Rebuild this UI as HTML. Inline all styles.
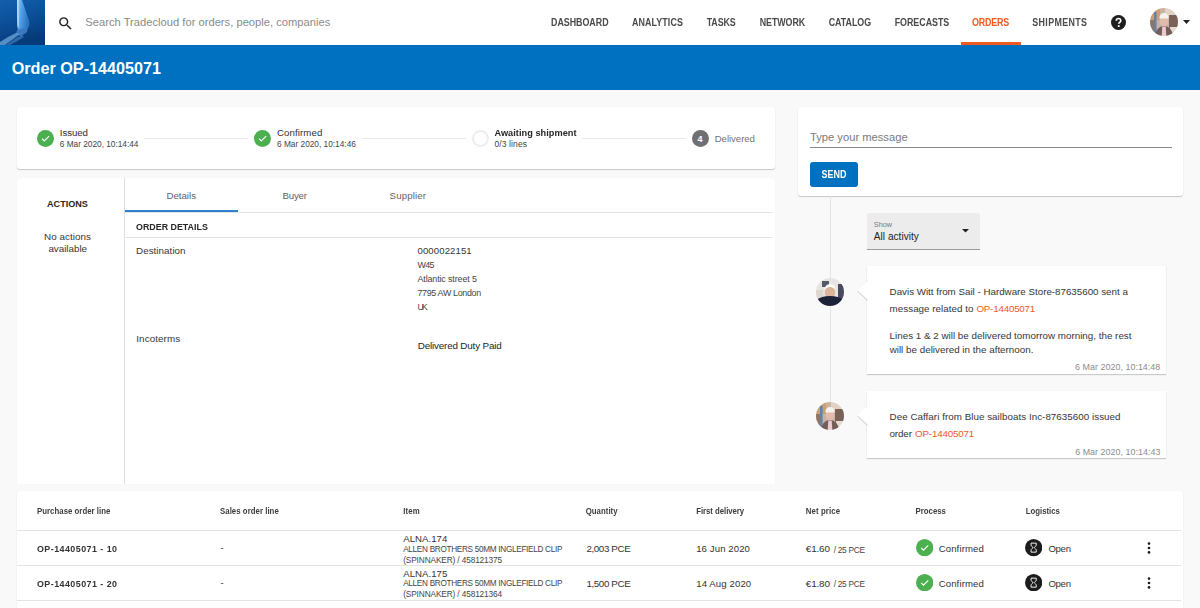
<!DOCTYPE html><html><head><meta charset="utf-8"><style>
html,body{margin:0;padding:0;}
body{width:1200px;height:608px;overflow:hidden;position:relative;background:#f9f9f9;font-family:"Liberation Sans",sans-serif;}
.t{position:absolute;white-space:nowrap;}
.b{position:absolute;}
</style></head><body>
<div class="b" style="left:0px;top:0px;width:1200px;height:45px;background:#fff;"></div>
<svg class="b" style="left:0;top:0" width="45" height="45" viewBox="0 0 45 45">
<defs><linearGradient id="sea" x1="0" y1="0" x2="0.3" y2="1"><stop offset="0" stop-color="#135fae"/><stop offset="0.5" stop-color="#0b4f98"/><stop offset="1" stop-color="#063a78"/></linearGradient>
<linearGradient id="sail" x1="0" y1="0" x2="1" y2="0.3"><stop offset="0" stop-color="#9fd0f6"/><stop offset="0.45" stop-color="#4f9fe6"/><stop offset="1" stop-color="#2a73c0"/></linearGradient>
<filter id="bl" x="-0.2" y="-0.2" width="1.4" height="1.4"><feGaussianBlur stdDeviation="0.45"/></filter></defs>
<rect width="45" height="45" fill="url(#sea)"/>
<g filter="url(#bl)">
<polygon points="17,-3 21,-3 29.5,22 29,27 24,30 18,31 17,22" fill="url(#sail)"/><polygon points="17,-3 18.5,-3 19,26 17.5,28" fill="#d8ecfb" opacity="0.6"/>
<polygon points="17,30 28,27 27,32 21,36 16,34" fill="#3a78c0"/>
<polygon points="0,45 0,42 8,37 16,33 20,34 12,40 5,45" fill="#6fa8dc" opacity="0.75"/>
<polygon points="6,45 16,38 22,35 24,37 14,43 10,45" fill="#4a86c8" opacity="0.6"/>
</g>
</svg>
<svg class="b" style="left:56.7px;top:14.7px" width="17" height="17" viewBox="0 0 24 24"><path fill="#212121" d="M15.5 14h-.79l-.28-.27A6.47 6.47 0 0 0 16 9.5 6.5 6.5 0 1 0 9.5 16c1.61 0 3.09-.59 4.23-1.57l.27.28v.79l5 4.99L20.49 19l-4.99-5zm-6 0C7.01 14 5 11.99 5 9.5S7.01 5 9.5 5 14 7.01 14 9.5 11.99 14 9.5 14z"/></svg>
<div class="t" style="left:85.30px;top:17.42px;font-size:11.2px;line-height:11.2px;color:#8a8a8a;">Search Tradecloud for orders, people, companies</div>
<div class="t" style="left:551.00px;top:18.87px;font-size:8.9px;line-height:8.9px;color:#4a4a4a;font-weight:bold;letter-spacing:-0.019px;transform:scaleY(1.150);transform-origin:0 7.53px;">DASHBOARD</div>
<div class="t" style="left:632.00px;top:18.87px;font-size:8.9px;line-height:8.9px;color:#4a4a4a;font-weight:bold;letter-spacing:0.112px;transform:scaleY(1.150);transform-origin:0 7.53px;">ANALYTICS</div>
<div class="t" style="left:706.70px;top:18.87px;font-size:8.9px;line-height:8.9px;color:#4a4a4a;font-weight:bold;letter-spacing:-0.101px;transform:scaleY(1.150);transform-origin:0 7.53px;">TASKS</div>
<div class="t" style="left:759.70px;top:18.87px;font-size:8.9px;line-height:8.9px;color:#4a4a4a;font-weight:bold;letter-spacing:-0.061px;transform:scaleY(1.150);transform-origin:0 7.53px;">NETWORK</div>
<div class="t" style="left:828.70px;top:18.87px;font-size:8.9px;line-height:8.9px;color:#4a4a4a;font-weight:bold;letter-spacing:-0.013px;transform:scaleY(1.150);transform-origin:0 7.53px;">CATALOG</div>
<div class="t" style="left:894.70px;top:18.87px;font-size:8.9px;line-height:8.9px;color:#4a4a4a;font-weight:bold;letter-spacing:-0.021px;transform:scaleY(1.150);transform-origin:0 7.53px;">FORECASTS</div>
<div class="t" style="left:972.10px;top:18.87px;font-size:8.9px;line-height:8.9px;color:#f05a1e;font-weight:bold;letter-spacing:-0.158px;transform:scaleY(1.150);transform-origin:0 7.53px;">ORDERS</div>
<div class="t" style="left:1032.30px;top:18.87px;font-size:8.9px;line-height:8.9px;color:#4a4a4a;font-weight:bold;letter-spacing:0.346px;transform:scaleY(1.150);transform-origin:0 7.53px;">SHIPMENTS</div>
<div class="b" style="left:961px;top:42px;width:60px;height:3px;background:#f05a1e;"></div>
<svg class="b" style="left:1111px;top:15px" width="15" height="15" viewBox="0 0 20 20"><circle cx="10" cy="10" r="10" fill="#1e1e1e"/><path d="M7 7.6a3 3 0 0 1 6 0c0 2-2.6 2.1-2.6 4" stroke="#fff" stroke-width="2.2" fill="none"/><rect x="9.1" y="13.6" width="2.4" height="2.4" fill="#fff"/></svg>
<svg class="b" style="left:1183px;top:20px" width="7" height="4"><polygon points="0,0 7,0 3.5,4" fill="#212121"/></svg>
<div class="b" style="left:0px;top:45px;width:1200px;height:45px;background:#0070c0;"></div>
<div class="t" style="left:11.70px;top:59.69px;font-size:16.2px;line-height:16.2px;color:#fff;font-weight:bold;">Order OP-14405071</div>
<div class="b" style="left:17px;top:107px;width:758px;height:62px;background:#fff;border-radius:3px;box-shadow:0 1px 1px rgba(0,0,0,0.2),0 0 1px rgba(0,0,0,0.05);"></div>
<div class="b" style="left:17px;top:178px;width:758px;height:305.5px;background:#fff;border-radius:3px 3px 0 0;box-shadow:0 0 1px rgba(0,0,0,0.05);"></div>
<div class="b" style="left:798px;top:107px;width:385px;height:89px;background:#fff;border-radius:3px;box-shadow:0 1px 1px rgba(0,0,0,0.2),0 0 1px rgba(0,0,0,0.05);"></div>
<div class="b" style="left:17px;top:491px;width:1166px;height:149px;background:#fff;border-radius:3px;box-shadow:0 1px 1px rgba(0,0,0,0.2),0 0 1px rgba(0,0,0,0.05);"></div>
<svg class="b" style="left:36.9px;top:129.7px" width="17" height="17" viewBox="0 0 20 20"><circle cx="10" cy="10" r="10" fill="#4caf50"/><path d="M6 10.3 l2.6 2.6 l5.6-5.6" stroke="#fff" stroke-width="1.35" fill="none"/></svg>
<div class="t" style="left:59.80px;top:128.19px;font-size:9.7px;line-height:9.7px;color:#303030;letter-spacing:-0.073px;">Issued</div>
<div class="t" style="left:59.80px;top:140.08px;font-size:8.3px;line-height:8.3px;color:#444;letter-spacing:-0.010px;">6 Mar 2020, 10:14:44</div>
<div class="b" style="left:144px;top:137.5px;width:104px;height:1.5px;background:#e9e9e9;"></div>
<svg class="b" style="left:254.0px;top:129.7px" width="17" height="17" viewBox="0 0 20 20"><circle cx="10" cy="10" r="10" fill="#4caf50"/><path d="M6 10.3 l2.6 2.6 l5.6-5.6" stroke="#fff" stroke-width="1.35" fill="none"/></svg>
<div class="t" style="left:277.00px;top:128.19px;font-size:9.7px;line-height:9.7px;color:#303030;letter-spacing:0.079px;">Confirmed</div>
<div class="t" style="left:277.00px;top:140.08px;font-size:8.3px;line-height:8.3px;color:#444;">6 Mar 2020, 10:14:46</div>
<div class="b" style="left:362px;top:137.5px;width:103.60000000000002px;height:1.5px;background:#e9e9e9;"></div>
<svg class="b" style="left:471.5px;top:129.5px" width="17" height="17"><circle cx="8.5" cy="8.5" r="7.5" fill="none" stroke="#eeeeee" stroke-width="2"/></svg>
<div class="t" style="left:494.40px;top:128.82px;font-size:9.2px;line-height:9.2px;color:#262626;font-weight:bold;letter-spacing:0.037px;transform:scaleY(1.050);transform-origin:0 7.78px;">Awaiting shipment</div>
<div class="t" style="left:494.40px;top:140.01px;font-size:8.5px;line-height:8.5px;color:#444;letter-spacing:0.117px;">0/3 lines</div>
<div class="b" style="left:582px;top:137.5px;width:104px;height:1.5px;background:#e9e9e9;"></div>
<svg class="b" style="left:692px;top:129.5px" width="17" height="17"><circle cx="8.5" cy="8.5" r="8.5" fill="#707070"/></svg>
<div class="t" style="left:697.60px;top:134.79px;font-size:9px;line-height:9px;color:#fff;font-weight:bold;">4</div>
<div class="t" style="left:714.70px;top:134.48px;font-size:9.6px;line-height:9.6px;color:#757575;letter-spacing:-0.033px;">Delivered</div>
<div class="b" style="left:124px;top:178px;width:1px;height:306px;background:#e0e0e0;"></div>
<div class="t" style="left:47.00px;top:199.50px;font-size:9.1px;line-height:9.1px;color:#262626;font-weight:bold;">ACTIONS</div>
<div class="t" style="left:44.00px;top:232.31px;font-size:9.8px;line-height:9.8px;color:#363636;letter-spacing:0.077px;">No actions</div>
<div class="t" style="left:48.40px;top:243.71px;font-size:9.8px;line-height:9.8px;color:#363636;">available</div>
<div class="t" style="left:166.40px;top:190.79px;font-size:9.7px;line-height:9.7px;color:#646464;">Details</div>
<div class="t" style="left:282.40px;top:190.79px;font-size:9.7px;line-height:9.7px;color:#646464;letter-spacing:-0.179px;">Buyer</div>
<div class="t" style="left:389.60px;top:190.79px;font-size:9.7px;line-height:9.7px;color:#646464;letter-spacing:0.114px;">Supplier</div>
<div class="b" style="left:125px;top:212px;width:647px;height:1px;background:#e3e3e3;"></div>
<div class="b" style="left:125px;top:210px;width:113px;height:2px;background:#2f80cf;"></div>
<div class="t" style="left:136.00px;top:222.67px;font-size:8.9px;line-height:8.9px;color:#262626;font-weight:bold;transform:scaleY(1.120);transform-origin:0 7.53px;">ORDER DETAILS</div>
<div class="b" style="left:125px;top:237px;width:647px;height:1px;background:#e3e3e3;"></div>
<div class="t" style="left:136.00px;top:245.91px;font-size:9.8px;line-height:9.8px;color:#363636;letter-spacing:0.055px;">Destination</div>
<div class="t" style="left:417.50px;top:246.28px;font-size:9.6px;line-height:9.6px;color:#363636;letter-spacing:0.092px;">0000022151</div>
<div class="t" style="left:417.50px;top:260.67px;font-size:8.9px;line-height:8.9px;color:#444;letter-spacing:-0.645px;">W45</div>
<div class="t" style="left:417.50px;top:275.07px;font-size:8.9px;line-height:8.9px;color:#444;letter-spacing:-0.114px;">Atlantic street 5</div>
<div class="t" style="left:417.50px;top:289.07px;font-size:8.9px;line-height:8.9px;color:#444;letter-spacing:-0.319px;">7795 AW London</div>
<div class="t" style="left:417.50px;top:303.47px;font-size:8.9px;line-height:8.9px;color:#444;letter-spacing:-2.271px;">UK</div>
<div class="t" style="left:136.30px;top:334.11px;font-size:9.8px;line-height:9.8px;color:#363636;letter-spacing:0.097px;">Incoterms</div>
<div class="t" style="left:417.70px;top:340.97px;font-size:9.9px;line-height:9.9px;color:#262626;letter-spacing:-0.179px;">Delivered Duty Paid</div>
<div class="t" style="left:810.00px;top:131.72px;font-size:11.2px;line-height:11.2px;color:#7a7a7a;">Type your message</div>
<div class="b" style="left:810px;top:147px;width:362px;height:1px;background:#8a8a8a;"></div>
<div class="b" style="left:810px;top:162px;width:48px;height:25px;background:#0070c0;border-radius:3px;"></div>
<div class="t" style="left:821.40px;top:170.89px;font-size:9px;line-height:9px;color:#fff;font-weight:bold;transform:scaleY(1.120);transform-origin:0 7.61px;">SEND</div>
<div class="b" style="left:830px;top:196px;width:1px;height:206px;background:#e4e4e4;"></div>
<div class="b" style="left:867px;top:213px;width:113px;height:36px;background:#ececec;border-radius:3px 3px 0 0;border-bottom:1px solid #9a9a9a;"></div>
<div class="t" style="left:873.80px;top:221.02px;font-size:7.3px;line-height:7.3px;color:#7a7a7a;letter-spacing:-0.029px;">Show</div>
<div class="t" style="left:873.80px;top:232.24px;font-size:10px;line-height:10px;color:#222;letter-spacing:0.050px;">All activity</div>
<svg class="b" style="left:962px;top:229px" width="7" height="4"><polygon points="0,0 7,0 3.5,3.5" fill="#212121"/></svg>
<svg class="b" style="left:816px;top:277.5px" width="28" height="28" viewBox="0 0 28 28"><defs><clipPath id="ca1"><circle cx="14" cy="14" r="14"/></clipPath><filter id="fa1" x="-0.1" y="-0.1" width="1.2" height="1.2"><feGaussianBlur stdDeviation="0.7"/></filter></defs><g clip-path="url(#ca1)"><g filter="url(#fa1)"><rect width="28" height="28" fill="#e6e5e1"/><rect x="6" y="3" width="7" height="6" fill="#55596a"/><rect x="22" y="6" width="6" height="15" fill="#4a4860"/><rect x="0" y="12" width="7" height="10" fill="#dcd6cf"/><ellipse cx="14" cy="14.5" rx="5.2" ry="6" fill="#dcb49c"/><path d="M8.3 12.5 q0.5-6.5 5.7-6.5 q5.2 0 5.7 6.5 q-1.5-3.5-5.7-3.5 q-4.2 0-5.7 3.5z" fill="#fbfaf6"/><path d="M0 28 l1-6 q4-4 13-4 q9 0 13 4 l1 6z" fill="#1f2138"/></g></g></svg>
<div class="b" style="left:867px;top:266px;width:299px;height:107.5px;background:#fff;box-shadow:0 1px 1px rgba(0,0,0,0.18),0 0 1px rgba(0,0,0,0.05);"></div>
<svg class="b" style="left:856px;top:280.2px" width="12" height="22"><polyline points="11.5,0.5 1.2,10.3 11.5,20" fill="none" stroke="rgba(0,0,0,0.05)" stroke-width="1"/><polyline points="1.5,11 11.5,20.5" fill="none" stroke="rgba(0,0,0,0.1)" stroke-width="1.2"/><polygon points="12,0.5 1,10 12,19.5" fill="#fff"/></svg>
<div class="t" style="left:889.60px;top:287.41px;font-size:9.8px;line-height:9.8px;color:#363636;letter-spacing:-0.015px;">Davis Witt from Sail - Hardware Store-87635600 sent a</div>
<div class="t" style="left:889.60px;top:304.31px;font-size:9.8px;line-height:9.8px;color:#363636;letter-spacing:0.032px;">message related to</div>
<div class="t" style="left:976.40px;top:304.31px;font-size:9.8px;line-height:9.8px;color:#f05a1e;letter-spacing:-0.211px;">OP-14405071</div>
<div class="t" style="left:889.60px;top:330.91px;font-size:9.8px;line-height:9.8px;color:#363636;letter-spacing:0.012px;">Lines 1 &amp; 2 will be delivered tomorrow morning, the rest</div>
<div class="t" style="left:889.65px;top:345.11px;font-size:9.8px;line-height:9.8px;color:#363636;letter-spacing:0.017px;">will be delivered in the afternoon.</div>
<div class="t" style="left:1075.10px;top:362.57px;font-size:8.9px;line-height:8.9px;color:#8c8c8c;letter-spacing:0.042px;">6 Mar 2020, 10:14:48</div>
<svg class="b" style="left:816px;top:401.7px" width="28" height="28" viewBox="0 0 28 28"><defs><clipPath id="ca2"><circle cx="14" cy="14" r="14"/></clipPath><filter id="fa2" x="-0.1" y="-0.1" width="1.2" height="1.2"><feGaussianBlur stdDeviation="0.7"/></filter></defs><g clip-path="url(#ca2)"><g filter="url(#fa2)"><rect width="28" height="28" fill="#c9b3a3"/><rect x="0" y="0" width="10" height="12" fill="#cf9e6e"/><rect x="15" y="0" width="13" height="9" fill="#e2d2c4"/><rect x="19" y="7" width="9" height="13" fill="#7a6258"/><rect x="20" y="19" width="8" height="9" fill="#e6dccf"/><rect x="4" y="4" width="2.6" height="22" fill="#5f84b4"/><rect x="0" y="12" width="4.5" height="12" fill="#8f7466"/><ellipse cx="14" cy="13.5" rx="4.3" ry="5" fill="#e3bcae"/><path d="M9.3 10.5 q0.3-5.5 4.7-5.5 q4.4 0 4.7 5.5z" fill="#f5f2ee"/><path d="M5 28 q1-9.5 9-10 q8 0.5 9 10z" fill="#735e58"/><path d="M12.3 18.5 h3.4 l0.6 9.5 h-4.6z" fill="#eccad2"/></g></g></svg>
<div class="b" style="left:867px;top:391px;width:299px;height:66.5px;background:#fff;box-shadow:0 1px 1px rgba(0,0,0,0.18),0 0 1px rgba(0,0,0,0.05);"></div>
<svg class="b" style="left:856px;top:404.5px" width="12" height="22"><polyline points="11.5,0.5 1.2,10.3 11.5,20" fill="none" stroke="rgba(0,0,0,0.05)" stroke-width="1"/><polyline points="1.5,11 11.5,20.5" fill="none" stroke="rgba(0,0,0,0.1)" stroke-width="1.2"/><polygon points="12,0.5 1,10 12,19.5" fill="#fff"/></svg>
<div class="t" style="left:889.60px;top:412.01px;font-size:9.8px;line-height:9.8px;color:#363636;letter-spacing:0.037px;">Dee Caffari from Blue sailboats Inc-87635600 issued</div>
<div class="t" style="left:889.50px;top:428.61px;font-size:9.8px;line-height:9.8px;color:#363636;letter-spacing:-0.096px;">order</div>
<div class="t" style="left:915.00px;top:428.61px;font-size:9.8px;line-height:9.8px;color:#f05a1e;letter-spacing:-0.180px;">OP-14405071</div>
<div class="t" style="left:1075.20px;top:447.57px;font-size:8.9px;line-height:8.9px;color:#8c8c8c;letter-spacing:0.042px;">6 Mar 2020, 10:14:43</div>
<svg class="b" style="left:1150px;top:8px" width="28" height="28" viewBox="0 0 28 28"><defs><clipPath id="ca0"><circle cx="14" cy="14" r="14"/></clipPath><filter id="fa0" x="-0.1" y="-0.1" width="1.2" height="1.2"><feGaussianBlur stdDeviation="0.7"/></filter></defs><g clip-path="url(#ca0)"><g filter="url(#fa0)"><rect width="28" height="28" fill="#c9b3a3"/><rect x="0" y="0" width="10" height="12" fill="#cf9e6e"/><rect x="15" y="0" width="13" height="9" fill="#e2d2c4"/><rect x="19" y="7" width="9" height="13" fill="#7a6258"/><rect x="20" y="19" width="8" height="9" fill="#e6dccf"/><rect x="4" y="4" width="2.6" height="22" fill="#5f84b4"/><rect x="0" y="12" width="4.5" height="12" fill="#8f7466"/><ellipse cx="14" cy="13.5" rx="4.3" ry="5" fill="#e3bcae"/><path d="M9.3 10.5 q0.3-5.5 4.7-5.5 q4.4 0 4.7 5.5z" fill="#f5f2ee"/><path d="M5 28 q1-9.5 9-10 q8 0.5 9 10z" fill="#735e58"/><path d="M12.3 18.5 h3.4 l0.6 9.5 h-4.6z" fill="#eccad2"/></g></g></svg>
<div class="t" style="left:37.00px;top:507.60px;font-size:7.8px;line-height:7.8px;color:#3c3c3c;font-weight:bold;letter-spacing:0.033px;transform:scaleY(1.120);transform-origin:0 6.60px;">Purchase order line</div>
<div class="t" style="left:220.00px;top:507.60px;font-size:7.8px;line-height:7.8px;color:#3c3c3c;font-weight:bold;letter-spacing:0.046px;transform:scaleY(1.120);transform-origin:0 6.60px;">Sales order line</div>
<div class="t" style="left:403.30px;top:507.60px;font-size:7.8px;line-height:7.8px;color:#3c3c3c;font-weight:bold;letter-spacing:0.157px;transform:scaleY(1.120);transform-origin:0 6.60px;">Item</div>
<div class="t" style="left:585.70px;top:507.60px;font-size:7.8px;line-height:7.8px;color:#3c3c3c;font-weight:bold;letter-spacing:0.039px;transform:scaleY(1.120);transform-origin:0 6.60px;">Quantity</div>
<div class="t" style="left:696.20px;top:507.60px;font-size:7.8px;line-height:7.8px;color:#3c3c3c;font-weight:bold;letter-spacing:-0.043px;transform:scaleY(1.120);transform-origin:0 6.60px;">First delivery</div>
<div class="t" style="left:805.80px;top:507.60px;font-size:7.8px;line-height:7.8px;color:#3c3c3c;font-weight:bold;letter-spacing:0.102px;transform:scaleY(1.120);transform-origin:0 6.60px;">Net price</div>
<div class="t" style="left:915.60px;top:507.60px;font-size:7.8px;line-height:7.8px;color:#3c3c3c;font-weight:bold;transform:scaleY(1.120);transform-origin:0 6.60px;">Process</div>
<div class="t" style="left:1025.80px;top:507.60px;font-size:7.8px;line-height:7.8px;color:#3c3c3c;font-weight:bold;letter-spacing:-0.030px;transform:scaleY(1.120);transform-origin:0 6.60px;">Logistics</div>
<div class="b" style="left:17px;top:530px;width:1164px;height:1px;background:#e3e3e3;"></div>
<div class="t" style="left:37.00px;top:545.17px;font-size:8.9px;line-height:8.9px;color:#333;font-weight:bold;letter-spacing:0.464px;transform:scaleY(1.050);transform-origin:0 7.53px;">OP-14405071 - 10</div>
<div class="t" style="left:220.50px;top:543.16px;font-size:9.5px;line-height:9.5px;color:#333;">-</div>
<div class="t" style="left:403.20px;top:534.28px;font-size:9.6px;line-height:9.6px;color:#333;letter-spacing:0.061px;">ALNA.174</div>
<div class="t" style="left:403.20px;top:545.86px;font-size:8.2px;line-height:8.2px;color:#444;letter-spacing:-0.295px;">ALLEN BROTHERS 50MM INGLEFIELD CLIP</div>
<div class="t" style="left:403.20px;top:555.78px;font-size:8.3px;line-height:8.3px;color:#444;letter-spacing:-0.135px;">(SPINNAKER) / 458121375</div>
<div class="t" style="left:586.40px;top:544.01px;font-size:9.8px;line-height:9.8px;color:#333;letter-spacing:-0.385px;">2,003 PCE</div>
<div class="t" style="left:696.20px;top:544.48px;font-size:9.6px;line-height:9.6px;color:#333;letter-spacing:0.095px;">16 Jun 2020</div>
<div class="t" style="left:805.80px;top:544.22px;font-size:9.9px;line-height:9.9px;color:#333;letter-spacing:-0.150px;">€1.60</div>
<div class="t" style="left:833.70px;top:545.58px;font-size:8.3px;line-height:8.3px;color:#444;letter-spacing:-0.271px;">/ 25 PCE</div>
<svg class="b" style="left:915.5500000000001px;top:539.35px" width="17.3" height="17.3" viewBox="0 0 20 20"><circle cx="10" cy="10" r="10" fill="#4caf50"/><path d="M6 10.3 l2.6 2.6 l5.6-5.6" stroke="#fff" stroke-width="1.35" fill="none"/></svg>
<div class="t" style="left:938.70px;top:544.28px;font-size:9.6px;line-height:9.6px;color:#333;letter-spacing:0.112px;">Confirmed</div>
<svg class="b" style="left:1025.05px;top:539.35px" width="17.3" height="17.3" viewBox="0 0 20 20"><circle cx="10" cy="10" r="10" fill="#1c1c1c"/><path d="M7 4.8h6v2.2c0 1.5-2.2 2.4-2.2 3 0 .6 2.2 1.5 2.2 3v2.2H7V13c0-1.5 2.2-2.4 2.2-3 0-.6-2.2-1.5-2.2-3z" fill="none" stroke="#f2f2f2" stroke-width="1.15"/></svg>
<div class="t" style="left:1048.40px;top:544.28px;font-size:9.6px;line-height:9.6px;color:#333;letter-spacing:-0.291px;">Open</div>
<svg class="b" style="left:1145.9px;top:540.2px" width="6" height="16"><circle cx="3" cy="3.6" r="1.3" fill="#1c1c1c"/><circle cx="3" cy="8" r="1.3" fill="#1c1c1c"/><circle cx="3" cy="12.4" r="1.3" fill="#1c1c1c"/></svg>
<div class="b" style="left:17px;top:565px;width:1164px;height:1px;background:#e3e3e3;"></div>
<div class="t" style="left:37.00px;top:579.67px;font-size:8.9px;line-height:8.9px;color:#333;font-weight:bold;letter-spacing:0.464px;transform:scaleY(1.050);transform-origin:0 7.53px;">OP-14405071 - 20</div>
<div class="t" style="left:220.50px;top:577.66px;font-size:9.5px;line-height:9.5px;color:#333;">-</div>
<div class="t" style="left:403.20px;top:568.78px;font-size:9.6px;line-height:9.6px;color:#333;letter-spacing:0.061px;">ALNA.175</div>
<div class="t" style="left:403.20px;top:580.36px;font-size:8.2px;line-height:8.2px;color:#444;letter-spacing:-0.295px;">ALLEN BROTHERS 50MM INGLEFIELD CLIP</div>
<div class="t" style="left:403.20px;top:590.28px;font-size:8.3px;line-height:8.3px;color:#444;letter-spacing:-0.135px;">(SPINNAKER) / 458121364</div>
<div class="t" style="left:586.40px;top:578.51px;font-size:9.8px;line-height:9.8px;color:#333;letter-spacing:-0.385px;">1,500 PCE</div>
<div class="t" style="left:696.20px;top:578.98px;font-size:9.6px;line-height:9.6px;color:#333;letter-spacing:0.110px;">14 Aug 2020</div>
<div class="t" style="left:805.80px;top:578.72px;font-size:9.9px;line-height:9.9px;color:#333;letter-spacing:-0.150px;">€1.80</div>
<div class="t" style="left:833.70px;top:580.08px;font-size:8.3px;line-height:8.3px;color:#444;letter-spacing:-0.271px;">/ 25 PCE</div>
<svg class="b" style="left:915.5500000000001px;top:573.85px" width="17.3" height="17.3" viewBox="0 0 20 20"><circle cx="10" cy="10" r="10" fill="#4caf50"/><path d="M6 10.3 l2.6 2.6 l5.6-5.6" stroke="#fff" stroke-width="1.35" fill="none"/></svg>
<div class="t" style="left:938.70px;top:578.78px;font-size:9.6px;line-height:9.6px;color:#333;letter-spacing:0.112px;">Confirmed</div>
<svg class="b" style="left:1025.05px;top:573.85px" width="17.3" height="17.3" viewBox="0 0 20 20"><circle cx="10" cy="10" r="10" fill="#1c1c1c"/><path d="M7 4.8h6v2.2c0 1.5-2.2 2.4-2.2 3 0 .6 2.2 1.5 2.2 3v2.2H7V13c0-1.5 2.2-2.4 2.2-3 0-.6-2.2-1.5-2.2-3z" fill="none" stroke="#f2f2f2" stroke-width="1.15"/></svg>
<div class="t" style="left:1048.40px;top:578.78px;font-size:9.6px;line-height:9.6px;color:#333;letter-spacing:-0.291px;">Open</div>
<svg class="b" style="left:1145.9px;top:574.7px" width="6" height="16"><circle cx="3" cy="3.6" r="1.3" fill="#1c1c1c"/><circle cx="3" cy="8" r="1.3" fill="#1c1c1c"/><circle cx="3" cy="12.4" r="1.3" fill="#1c1c1c"/></svg>
<div class="b" style="left:17px;top:599.5px;width:1164px;height:1.0px;background:#e3e3e3;"></div>
</body></html>
